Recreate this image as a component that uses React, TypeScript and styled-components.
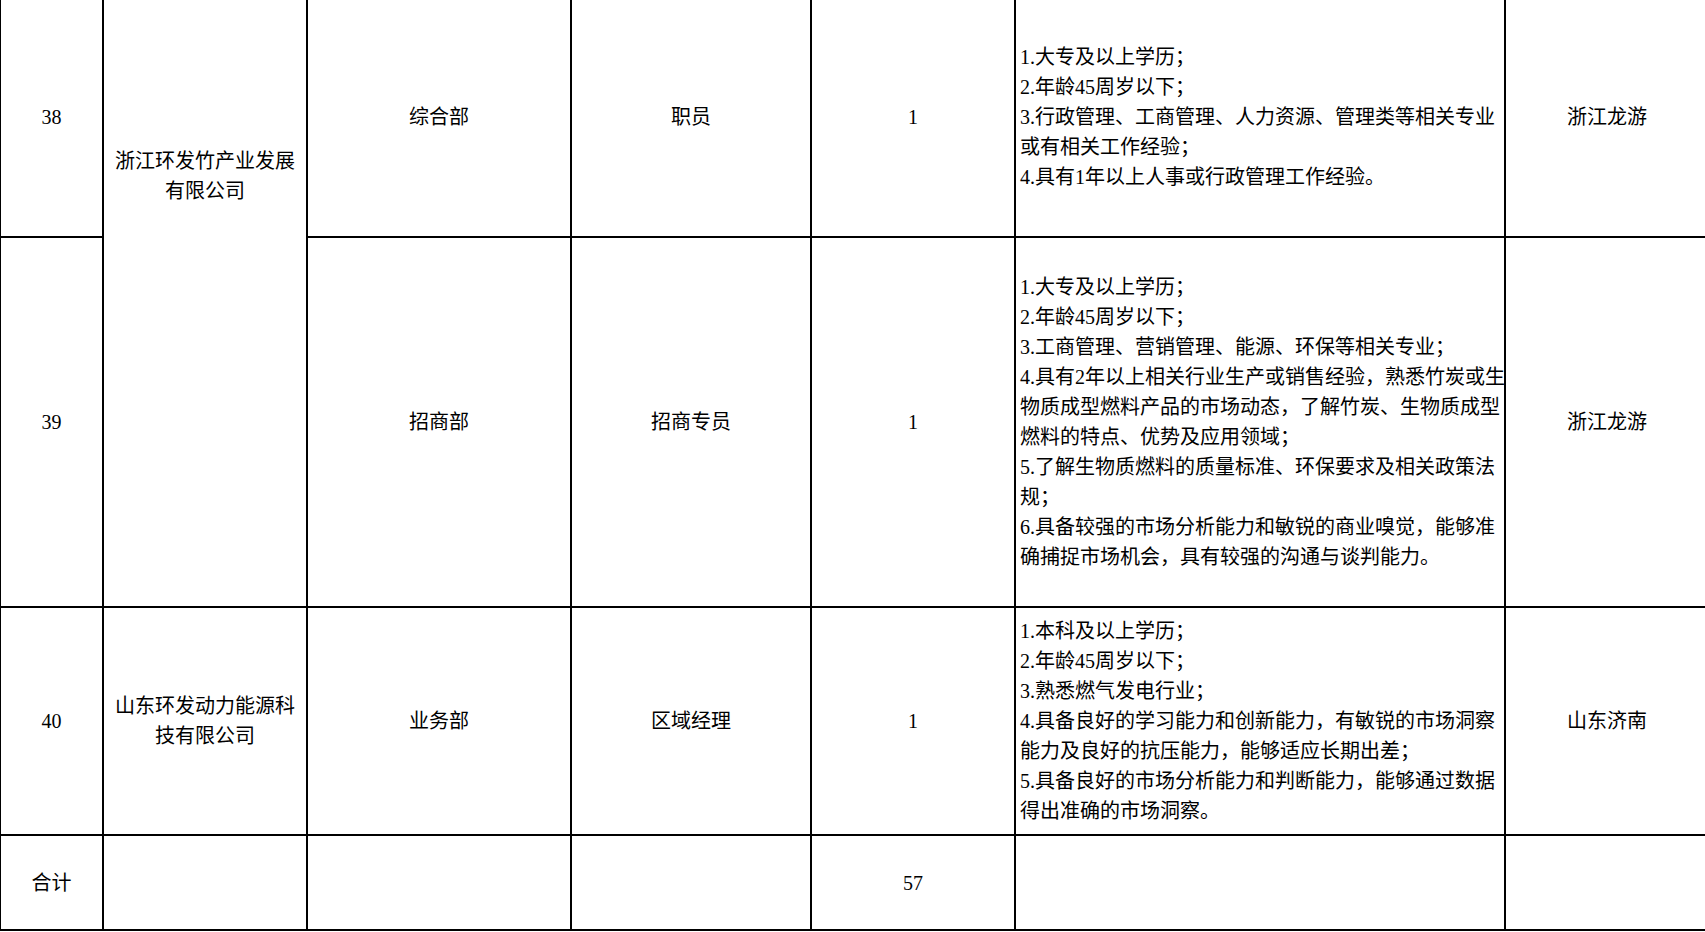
import styled, { createGlobalStyle } from 'styled-components';

const GlobalStyle = createGlobalStyle`
  html, body {
    margin: 0;
    padding: 0;
    background: #fff;
    overflow: hidden;
  }
  body {
    font-family: "Liberation Serif", "Noto Sans CJK SC", serif;
    color: #000;
  }
`;

type Job = {
  no: string;
  company?: string;
  companySpan?: number;
  dept: string;
  post: string;
  count: string;
  reqs: string[];
  place: string;
  height: number;
};

const jobs: Job[] = [
  {
    no: '38',
    company: '浙江环发竹产业发展有限公司',
    companySpan: 2,
    dept: '综合部',
    post: '职员',
    count: '1',
    reqs: [
      '1.大专及以上学历；',
      '2.年龄45周岁以下；',
      '3.行政管理、工商管理、人力资源、管理类等相关专业',
      '或有相关工作经验；',
      '4.具有1年以上人事或行政管理工作经验。',
    ],
    place: '浙江龙游',
    height: 240,
  },
  {
    no: '39',
    dept: '招商部',
    post: '招商专员',
    count: '1',
    reqs: [
      '1.大专及以上学历；',
      '2.年龄45周岁以下；',
      '3.工商管理、营销管理、能源、环保等相关专业；',
      '4.具有2年以上相关行业生产或销售经验，熟悉竹炭或生',
      '物质成型燃料产品的市场动态，了解竹炭、生物质成型',
      '燃料的特点、优势及应用领域；',
      '5.了解生物质燃料的质量标准、环保要求及相关政策法',
      '规；',
      '6.具备较强的市场分析能力和敏锐的商业嗅觉，能够准',
      '确捕捉市场机会，具有较强的沟通与谈判能力。',
    ],
    place: '浙江龙游',
    height: 370,
  },
  {
    no: '40',
    company: '山东环发动力能源科技有限公司',
    companySpan: 1,
    dept: '业务部',
    post: '区域经理',
    count: '1',
    reqs: [
      '1.本科及以上学历；',
      '2.年龄45周岁以下；',
      '3.熟悉燃气发电行业；',
      '4.具备良好的学习能力和创新能力，有敏锐的市场洞察',
      '能力及良好的抗压能力，能够适应长期出差；',
      '5.具备良好的市场分析能力和判断能力，能够通过数据',
      '得出准确的市场洞察。',
    ],
    place: '山东济南',
    height: 228,
  },
];

export default function App() {
  return (
    <>
      <GlobalStyle />
      <Sheet>
        <colgroup>
          <col style={{ width: 103 }} />
          <col style={{ width: 204 }} />
          <col style={{ width: 264 }} />
          <col style={{ width: 240 }} />
          <col style={{ width: 204 }} />
          <col style={{ width: 490 }} />
          <col style={{ width: 204 }} />
        </colgroup>
        <tbody>
          {jobs.map((job) => (
            <Row key={job.no} $height={job.height}>
              <Cell>{job.no}</Cell>
              {job.company && (
                <CompanyCell rowSpan={job.companySpan} $top={job.companySpan === 2}>
                  {job.company}
                </CompanyCell>
              )}
              <Cell>{job.dept}</Cell>
              <Cell>{job.post}</Cell>
              <Cell>{job.count}</Cell>
              <ReqCell>
                {job.reqs.map((line, i) => (
                  <ReqLine key={i}>{line}</ReqLine>
                ))}
              </ReqCell>
              <Cell>{job.place}</Cell>
            </Row>
          ))}
          <Row $height={95}>
            <Cell>合计</Cell>
            <Cell />
            <Cell />
            <Cell />
            <Cell>57</Cell>
            <Cell />
            <Cell />
          </Row>
        </tbody>
      </Sheet>
    </>
  );
}

const Sheet = styled.table`
  border-collapse: collapse;
  table-layout: fixed;
  width: 1709px;
  margin: -4px 0 0 -1px;
  font-size: 20px;
  line-height: 30px;
`;

const Row = styled.tr<{ $height: number }>`
  height: ${(p) => p.$height}px;
`;

const Cell = styled.td`
  border: 2px solid #000;
  padding: 0 7px;
  text-align: center;
  vertical-align: middle;
`;

const CompanyCell = styled(Cell)<{ $top: boolean }>`
  vertical-align: ${(p) => (p.$top ? 'top' : 'middle')};
  padding-top: ${(p) => (p.$top ? '148px' : '0')};
`;

const ReqCell = styled(Cell)`
  text-align: left;
  padding: 0 0 0 4px;
`;

const ReqLine = styled.div`
  white-space: nowrap;
`;
